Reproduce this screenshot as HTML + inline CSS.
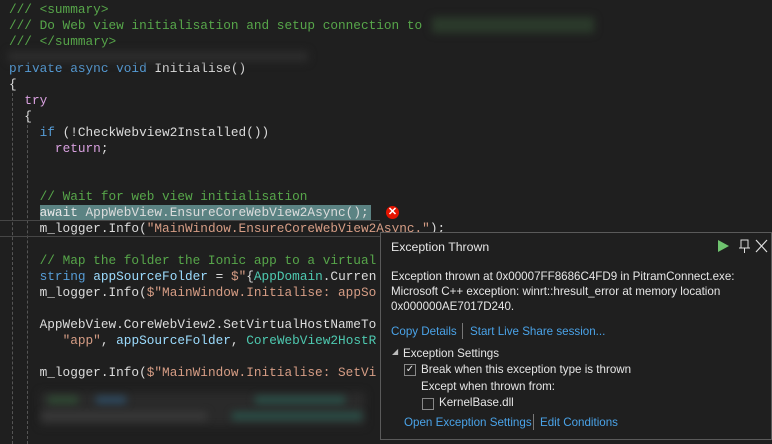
<!DOCTYPE html>
<html><head><meta charset="utf-8"><style>
body{margin:0;width:772px;height:444px;background:#1f1f1f;overflow:hidden;position:relative;font-family:"Liberation Mono",monospace}
pre{margin:0;position:absolute;left:9px;font-family:"Liberation Mono",monospace;font-size:12.75px;line-height:16px;color:#dcdcdc;white-space:pre}
.c{color:#57a64a}.k{color:#569cd6}.p{color:#d8a0df}.s{color:#d69d85}.t{color:#4ec9b0}.v{color:#9cdcfe}
.g{position:absolute;width:0;border-left:1px dashed #555}
.blur{position:absolute;filter:blur(4px)}
#pop{position:absolute;left:380px;top:232px;width:392px;height:208px;background:#1f1f1f;border:1px solid #5a5a5a;box-sizing:border-box;font-family:"Liberation Sans",sans-serif;font-size:11.6px;color:#e6e6e6}
#pop div{position:absolute;white-space:nowrap}
.l{color:#4aa3e8}
</style></head><body>
<div class="g" style="left:12px;top:88px;height:356px"></div>
<div class="g" style="left:27px;top:120px;height:324px"></div>
<div style="position:absolute;left:40px;top:205px;width:331px;height:15px;background:#5b8383"></div>
<div style="position:absolute;left:0;top:220px;width:380px;border-top:1px solid #464646"></div>
<div style="position:absolute;left:0;top:236px;width:380px;border-top:1px solid #464646"></div>
<pre style="top:2px"><span class="c">/// &lt;summary&gt;
/// Do Web view initialisation and setup connection to</span>
<span class="c">/// &lt;/summary&gt;</span></pre>
<pre style="top:61px"><span class="k">private async void</span> Initialise()
{
  <span class="p">try</span>
  {
    <span class="k">if</span> (!CheckWebview2Installed())
      <span class="p">return</span>;


    <span class="c">// Wait for web view initialisation</span>
    <span style="color:#e8e8e8">await</span> AppWebView.EnsureCoreWebView2Async();
    m_logger.Info(<span class="s">"MainWindow.EnsureCoreWebView2Async."</span>);

    <span class="c">// Map the folder the Ionic app to a virtual</span>
    <span class="k">string</span> <span class="v">appSourceFolder</span> = <span class="s">$"</span>{<span class="t">AppDomain</span>.Curren
    m_logger.Info(<span class="s">$"MainWindow.Initialise: appSo</span>

    AppWebView.CoreWebView2.SetVirtualHostNameTo
       <span class="s">"app"</span>, <span class="v">appSourceFolder</span>, <span class="t">CoreWebView2HostR</span>

    m_logger.Info(<span class="s">$"MainWindow.Initialise: SetVi</span>
</pre>
<div class="blur" style="left:432px;top:17px;width:162px;height:16px;background:#2b3a2b"></div>
<div class="blur" style="left:8px;top:51px;width:300px;height:11px;background:#2c2c2c"></div>
<div class="blur" style="left:40px;top:392px;width:325px;height:34px;background:#2a2a2a"></div>
<div class="blur" style="left:48px;top:396px;width:30px;height:8px;background:#2f4a33"></div>
<div class="blur" style="left:96px;top:396px;width:30px;height:8px;background:#2e4a60"></div>
<div class="blur" style="left:255px;top:396px;width:90px;height:8px;background:#2a5048"></div>
<div class="blur" style="left:232px;top:412px;width:130px;height:8px;background:#2a5048"></div>
<div class="blur" style="left:42px;top:412px;width:165px;height:8px;background:#3a3a3a"></div>
<div style="position:absolute;left:386px;top:206px;width:13px;height:13px;border-radius:50%;background:#e51400;color:#fff;font:bold 11px/13px 'Liberation Sans',sans-serif;text-align:center">✕</div>
<div id="pop">
<div style="left:10px;top:7px;font-size:12.3px">Exception Thrown</div>
<svg style="position:absolute;left:335px;top:6px" width="52" height="14"><path d="M2 1 L13 7 L2 13Z" fill="#6fc36f"/><path d="M25 1h7v8h-7zM28.5 9v5M23 9h11" stroke="#ddd" fill="none"/><path d="M40 1l11 12M51 1L40 13" stroke="#ddd" stroke-width="1.2"/></svg>
<div style="left:10px;top:36px;line-height:15px">Exception thrown at 0x00007FF8686C4FD9 in PitramConnect.exe:<br>Microsoft C++ exception: winrt::hresult_error at memory location<br>0x000000AE7017D240.</div>
<div style="left:10px;top:92px" class="l">Copy Details</div>
<div style="left:81px;top:90px;height:16px;border-left:1px solid #777"></div>
<div style="left:89px;top:92px" class="l">Start Live Share session...</div>
<div style="left:11px;top:114px;font-size:8px;color:#bbb">◢</div>
<div style="left:22px;top:114px">Exception Settings</div>
<div style="left:23px;top:131px;width:10px;height:10px;border:1px solid #888;font-size:10px;line-height:10px;text-align:center">✓</div>
<div style="left:40px;top:130px">Break when this exception type is thrown</div>
<div style="left:40px;top:147px">Except when thrown from:</div>
<div style="left:41px;top:165px;width:10px;height:10px;border:1px solid #888"></div>
<div style="left:58px;top:163px">KernelBase.dll</div>
<div style="left:23px;top:183px" class="l">Open Exception Settings</div>
<div style="left:152px;top:181px;height:16px;border-left:1px solid #777"></div>
<div style="left:159px;top:183px" class="l">Edit Conditions</div>
</div>
</body></html>
